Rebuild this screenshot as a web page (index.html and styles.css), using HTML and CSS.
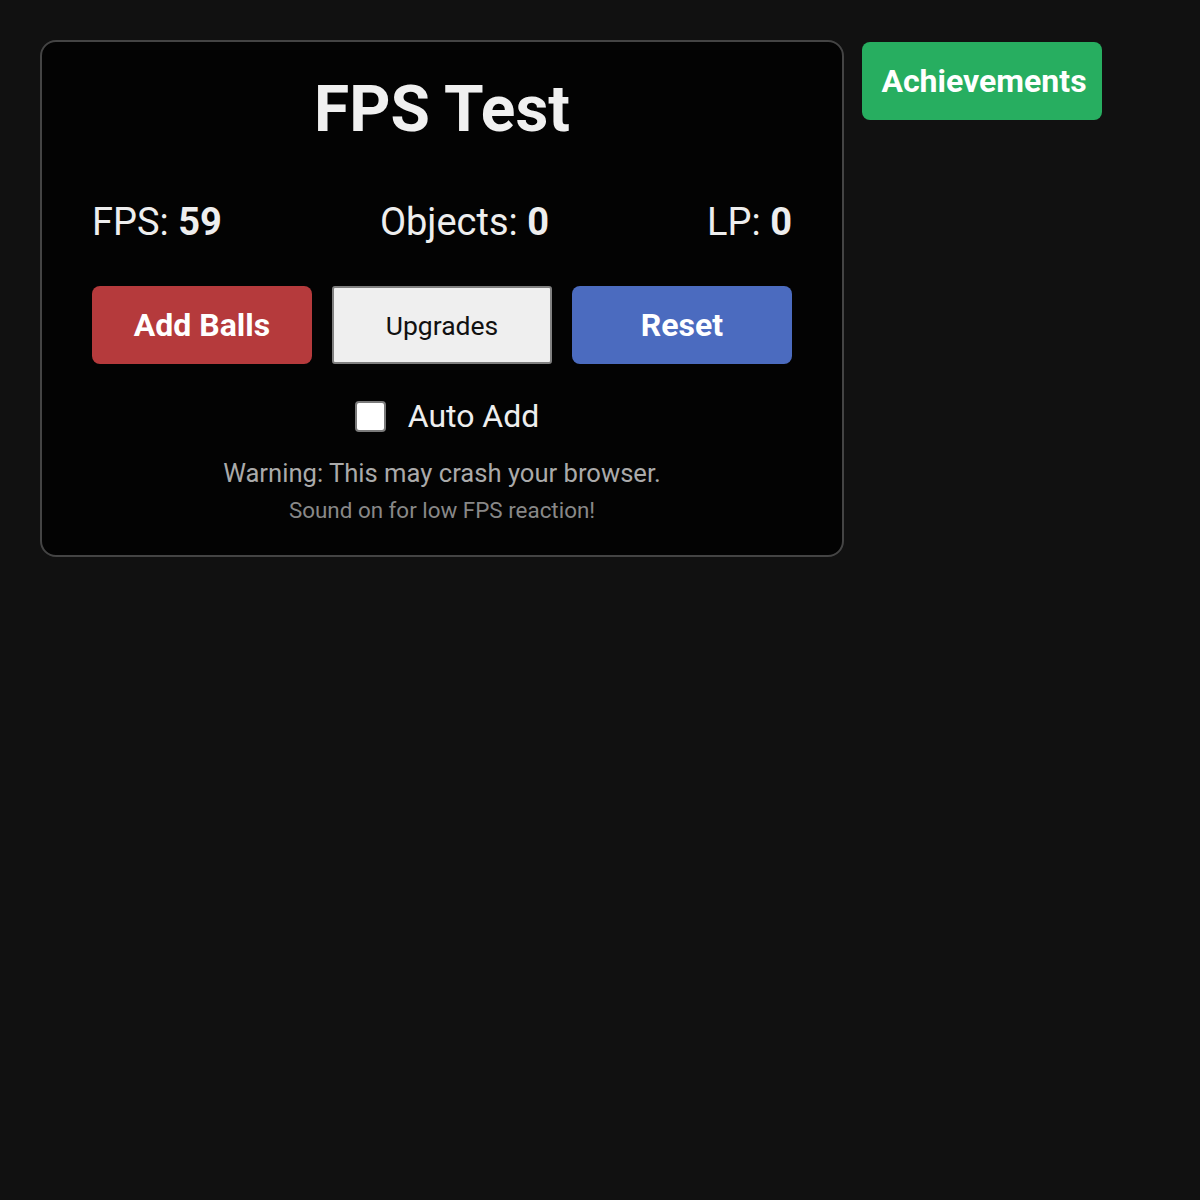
FILE: index.html
```html
<!DOCTYPE HTML>
<html>
<head>
  <title>FPS Test</title>
  <meta charset="utf-8">
  <link rel="stylesheet" href="styles.css">
</head>
<body>
  <div class="page">
    <div class="panel">
      <h1>FPS Test</h1>
      <div class="stats">
        <div class="stat">FPS: <b id="fpsValue">59</b></div>
        <div class="stat">Objects: <b id="objectsValue">0</b></div>
        <div class="stat">LP: <b id="lpValue">0</b></div>
      </div>
      <div class="buttons">
        <button class="btn addBtn">Add Balls</button>
        <button class="upgradeBtn">Upgrades</button>
        <button class="btn resetBtn">Reset</button>
      </div>
      <label class="autoAdd">
        <input type="checkbox" id="autoAdd">
        <span>Auto Add</span>
      </label>
      <p class="warning">Warning: This may crash your browser.</p>
      <p class="hint">Sound on for low FPS reaction!</p>
    </div>
    <button class="btn achieveBtn">Achievements</button>
  </div>
</body>
</html>
```

FILE: styles.css
```css
body {
  margin: 0;
  padding: 40px;
  background-color: #111111;
  font-family: Roboto, "Liberation Sans", sans-serif;
  color: #eeeeee;
}

.page {
  display: flex;
  flex-direction: row;
  align-items: flex-start;
  gap: 18px;
}

.panel {
  width: 700px;
  padding: 30px 50px 32px 50px;
  background-color: #030303;
  border: 2px solid #444;
  border-radius: 16px;
  display: flex;
  flex-direction: column;
  align-items: center;
}

h1 {
  margin: 0 0 53px 0;
  font-size: 64px;
  font-weight: bold;
  color: #f0f0f0;
}

.stats {
  width: 100%;
  display: flex;
  justify-content: space-between;
  font-size: 38px;
}

.stat b {
  font-weight: bold;
}

.buttons {
  width: 100%;
  display: flex;
  justify-content: space-between;
  margin-top: 42px;
}

.btn {
  border: none;
  border-radius: 8px;
  color: #fff;
  font-family: Roboto, "Liberation Sans", sans-serif;
  font-size: 32px;
  font-weight: bold;
  height: 78px;
  cursor: pointer;
}

.addBtn,
.resetBtn,
.upgradeBtn {
  width: 220px;
  flex: none;
}

.addBtn {
  background-color: #b53a3c;
}

.resetBtn {
  background-color: #4b6bbf;
}

.upgradeBtn {
  height: 78px;
  background-color: #efefef;
  border: 2px solid #808080;
  border-radius: 3px;
  color: #111;
  font-family: Roboto, "Liberation Sans", sans-serif;
  font-size: 26.5px;
}

.achieveBtn {
  background-color: #27ae60;
  padding: 0 10px 0 14px;
  width: 240px;
  margin-top: 2px;
}

.autoAdd {
  display: flex;
  align-items: center;
  margin-top: 33px;
  font-size: 32px;
}

.autoAdd input {
  appearance: none;
  width: 31px;
  height: 31px;
  margin: 0 22px 0 10px;
  background-color: #fff;
  border: 2px solid #7a7a7a;
  border-radius: 4px;
}

.warning {
  margin: 23px 0 0 0;
  font-size: 25.6px;
  color: #aaaaaa;
}

.hint {
  margin: 9px 0 0 0;
  font-size: 22.4px;
  color: #888888;
}
```
